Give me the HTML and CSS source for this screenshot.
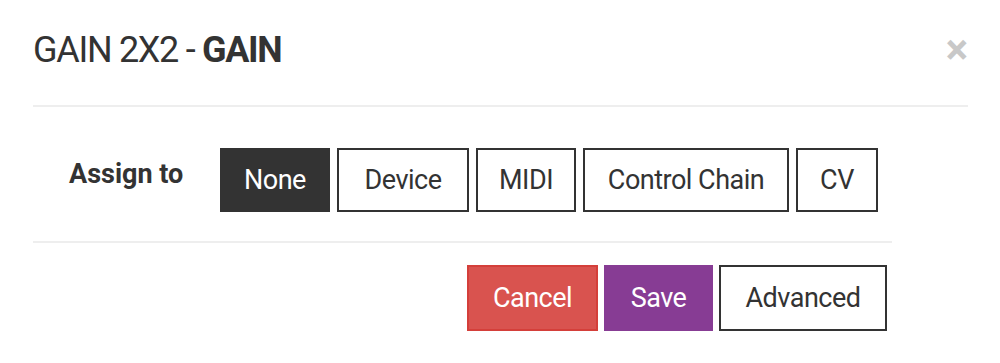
FILE: index.html
```html
<!DOCTYPE html>
<html>
<head>
<meta charset="utf-8">
<link rel="stylesheet" href="styles.css">
</head>
<body>
<div class="modal">
  <div class="modal-header">
    <h1 class="title">GAIN 2X2 - <b>GAIN</b></h1>
    <span class="close">&times;</span>
  </div>
  <div class="modal-body">
    <div class="assign-row">
      <span class="assign-label">Assign to</span>
      <div class="btn-group">
        <button class="btn btn-active">None</button>
        <button class="btn">Device</button>
        <button class="btn">MIDI</button>
        <button class="btn">Control Chain</button>
        <button class="btn">CV</button>
      </div>
    </div>
    <div class="footer">
      <button class="btn btn-cancel">Cancel</button>
      <button class="btn btn-save">Save</button>
      <button class="btn btn-adv">Advanced</button>
    </div>
  </div>
</div>
</body>
</html>
```
FILE: styles.css
```css
* { box-sizing: border-box; }
html, body { margin: 0; padding: 0; background: #fff; }
body { font-family: Roboto, "Liberation Sans", sans-serif; color: #333; }
.modal { width: 1000px; height: 363px; padding: 0 32px 0 33px; }
.modal-header {
  height: 107px;
  display: flex;
  align-items: center;
  justify-content: space-between;
  border-bottom: 2px solid #eeeeee;
  padding-bottom: 6px;
}
.title {
  margin: 0;
  font-size: 36px;
  font-weight: 400;
  letter-spacing: -1.3px;
  color: #333;
}
.title b { font-weight: 700; }
.close {
  font-size: 42px;
  font-weight: 700;
  color: #c8c8c8;
  line-height: 1;
}
.modal-body { width: 859px; }
.assign-row {
  display: flex;
  align-items: center;
  padding: 41px 0 29px 36px;
  border-bottom: 2px solid #eeeeee;
}
.assign-label {
  font-size: 27px;
  font-weight: 700;
  width: 151px;
  margin-top: -12px;
  letter-spacing: 0;
  white-space: nowrap;
}
.btn-group { display: flex; gap: 7px; }
.btn {
  font-family: Roboto, "Liberation Sans", sans-serif;
  font-size: 27px;
  color: #333;
  background: #fff;
  border: 2px solid #333;
  height: 64px;
  padding: 0;
  letter-spacing: -0.5px;
  white-space: nowrap;
  cursor: pointer;
}
.btn-active { background: #333; color: #fff; width: 110px; }
.btn-group .btn:nth-child(2) { width: 132px; }
.btn-group .btn:nth-child(3) { width: 100px; }
.btn-group .btn:nth-child(4) { width: 206px; }
.btn-group .btn:nth-child(5) { width: 82px; }
.footer {
  display: flex;
  justify-content: flex-end;
  gap: 6px;
  padding-top: 22px;
  padding-right: 5px;
}
.footer .btn { height: 66px; }
.btn-cancel { background: #d9534f; border-color: #d43f3a; color: #fff; width: 131px; }
.btn-save { background: #873c94; border-color: #873c94; color: #fff; width: 109px; }
.btn-adv { width: 168px; }
```
